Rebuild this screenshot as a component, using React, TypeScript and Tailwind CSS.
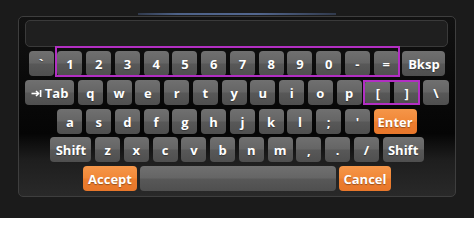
import React from "react";

const grayKey =
  "bg-[linear-gradient(to_bottom,#707070_0%,#656565_48%,#585858_52%,#4f4f4f_100%)]";
const orangeKey =
  "bg-[linear-gradient(to_bottom,#f59649_0%,#f18838_48%,#ec7d2e_52%,#e8772b_100%)]";

function Key({
  label,
  w = "w-[25px]",
  orange = false,
  children,
}: {
  label?: string;
  w?: string;
  orange?: boolean;
  children?: React.ReactNode;
}) {
  return (
    <div
      className={`${w} h-[25px] shrink-0 rounded-[4px] ${
        orange ? orangeKey : grayKey
      } flex items-center justify-center pt-[2px] text-[13px] font-bold leading-none text-white [text-shadow:0_1px_1px_rgba(0,0,0,0.35)]`}
    >
      {children ?? label}
    </div>
  );
}

function TabIcon() {
  return (
    <svg width="11" height="9" viewBox="0 0 11 9" className="mr-[3px]">
      <path d="M0.5 4.5H7" stroke="white" strokeWidth="1.6" />
      <path d="M5 2L7.6 4.5L5 7" stroke="white" strokeWidth="1.6" fill="none" />
      <path d="M9.6 1V8" stroke="white" strokeWidth="1.6" />
    </svg>
  );
}

export default function App() {
  const nums = ["1", "2", "3", "4", "5", "6", "7", "8", "9", "0", "-", "="];
  const row2 = ["q", "w", "e", "r", "t", "y", "u", "i", "o", "p"];
  const row3 = ["a", "s", "d", "f", "g", "h", "j", "k", "l", ";", "'"];
  const row4 = ["z", "x", "c", "v", "b", "n", "m", ",", ".", "/"];

  return (
    <div
      className="w-[474px] h-[218px] bg-[#1b1b1b] pt-[13px] flex flex-col overflow-hidden"
      style={{ fontFamily: '"Open Sans", "Noto Sans", sans-serif' }}
    >
      <div className="ml-[138px] w-[198px] h-[2px] bg-[linear-gradient(to_right,rgba(70,88,125,0.5),#4e6288_20%,#53678f_60%,rgba(70,88,125,0.5))]" />
      <div className="mt-[1px] ml-[18px] w-[438px] h-[181px] rounded-[5px] border border-[#3e3e3e] bg-[linear-gradient(to_bottom,#121212_0%,#0a0a0a_35%,#050505_65%,#1e1e1e_80%,#292929_100%)] px-[6px] pt-[3px] flex flex-col">
        <div className="h-[27px] w-[423px] rounded-[5px] border border-[#3a3a3a] bg-[#1f1f1f]" />
        <div className="mt-[4px] flex flex-col gap-[3.75px] items-center">
          {/* Row 1 */}
          <div className="flex gap-[3.75px]">
            <Key label="`" />
            <div className="relative flex gap-[3.75px]">
              {nums.map((n) => (
                <Key key={n} label={n} />
              ))}
              <span className="pointer-events-none absolute -left-[2px] -right-[1px] -top-[5px] -bottom-[1px] border-2 border-[#b22fc3]" />
            </div>
            <Key label="Bksp" w="w-[43px]" />
          </div>
          {/* Row 2 */}
          <div className="flex gap-[3.75px]">
            <Key w="w-[49px]">
              <span className="flex items-center">
                <TabIcon />
                Tab
              </span>
            </Key>
            {row2.map((n) => (
              <Key key={n} label={n} />
            ))}
            <div className="relative flex gap-[3.75px]">
              <Key label="[" />
              <Key label="]" />
              <span className="pointer-events-none absolute -left-[2px] -right-[1px] top-0 -bottom-[0px] border-2 border-[#b22fc3]" />
            </div>
            <Key label="\" w="w-[26px]" />
          </div>
          {/* Row 3 */}
          <div className="flex gap-[3.75px]">
            {row3.map((n) => (
              <Key key={n} label={n} />
            ))}
            <Key label="Enter" w="w-[43px]" orange />
          </div>
          {/* Row 4 */}
          <div className="flex gap-[3.75px]">
            <Key label="Shift" w="w-[41px]" />
            {row4.map((n) => (
              <Key key={n} label={n} />
            ))}
            <Key label="Shift" w="w-[41px]" />
          </div>
          {/* Row 5 */}
          <div className="flex gap-[3px]">
            <Key label="Accept" w="w-[54px]" orange />
            <Key label="" w="w-[196px]" />
            <Key label="Cancel" w="w-[52px]" orange />
          </div>
        </div>
      </div>
    </div>
  );
}
